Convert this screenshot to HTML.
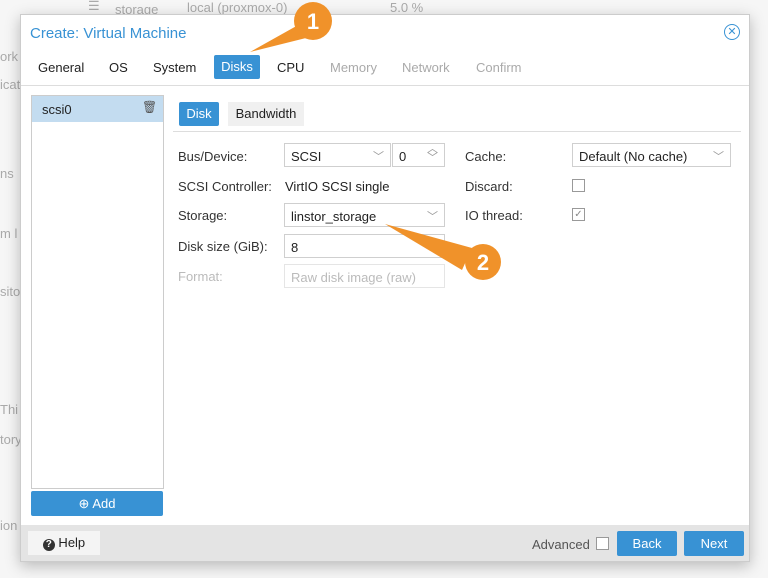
<!DOCTYPE html><html><head><style>
body{margin:0;width:768px;height:578px;background:#f6f6f6;font-family:"Liberation Sans",sans-serif;font-size:13px;color:#222;position:relative;overflow:hidden}
.a{position:absolute}
.bg{color:#aaa;font-size:13px}
.dlg{left:20px;top:14px;width:728px;height:546px;background:#fff;border:1px solid #ccc;box-shadow:0 4px 14px rgba(0,0,0,.25)}
.in{border:1px solid #cfcfcf;background:#fff;height:24px;box-sizing:border-box;padding:5px 6px;font-size:13px}
.lbl{color:#333}
.btn{background:#3892d4;color:#fff;text-align:center;border-radius:2px}
.chev{position:absolute;right:6px;top:4px;color:#999;font-size:11px}
.cb{width:13px;height:13px;border:1px solid #999;box-sizing:border-box;background:#fff}
</style></head><body>
<div class="a bg" style="left:88px;top:-2px">☰</div>
<div class="a bg" style="left:115px;top:2px">storage</div>
<div class="a bg" style="left:187px;top:0px">local (proxmox-0)</div>
<div class="a bg" style="left:390px;top:0px">5.0 %</div>
<div class="a bg" style="left:0;top:49px">ork</div><div class="a bg" style="left:0;top:77px">icat</div>
<div class="a bg" style="left:0;top:166px">ns</div><div class="a bg" style="left:0;top:226px">m l</div>
<div class="a bg" style="left:0;top:284px">sito</div><div class="a bg" style="left:0;top:402px">Thi</div>
<div class="a bg" style="left:0;top:432px">tory</div><div class="a bg" style="left:0;top:518px">ion</div>
<div class="a dlg">
 <div class="a" style="left:9px;top:10px;color:#3892d4;font-size:15px">Create: Virtual Machine</div>
 <div class="a" style="left:703px;top:9px;width:14px;height:14px;border:1px solid #3892d4;border-radius:50%;color:#3892d4;font-size:11px;text-align:center;line-height:14px">✕</div>
 <div class="a" style="left:0;top:38px;width:728px;height:32px;border-bottom:1px solid #ddd"></div>
 <div class="a" style="left:17px;top:45px">General</div>
 <div class="a" style="left:88px;top:45px">OS</div>
 <div class="a" style="left:132px;top:45px">System</div>
 <div class="a btn" style="left:193px;top:40px;width:46px;height:24px;line-height:24px">Disks</div>
 <div class="a" style="left:256px;top:45px">CPU</div>
 <div class="a" style="left:309px;top:45px;color:#aaa">Memory</div>
 <div class="a" style="left:381px;top:45px;color:#aaa">Network</div>
 <div class="a" style="left:455px;top:45px;color:#aaa">Confirm</div>
 <div class="a" style="left:10px;top:80px;width:131px;height:392px;border:1px solid #ccc"></div>
 <div class="a" style="left:11px;top:81px;width:131px;height:26px;background:#c3dcf0"></div>
 <div class="a" style="left:21px;top:87px">scsi0</div>
 <div class="a" style="left:121px;top:85px;color:#555;font-size:12px">🗑</div>
 <div class="a btn" style="left:10px;top:476px;width:132px;height:25px;line-height:25px">⊕ Add</div>
 <div class="a btn" style="left:158px;top:87px;width:40px;height:24px;line-height:24px">Disk</div>
 <div class="a" style="left:207px;top:87px;width:76px;height:24px;line-height:24px;background:#f0f0f0;text-align:center">Bandwidth</div>
 <div class="a" style="left:152px;top:116px;width:568px;border-top:1px solid #ddd"></div>
 <div class="a lbl" style="left:157px;top:134px">Bus/Device:</div>
 <div class="a in" style="left:263px;top:128px;width:107px">SCSI<span class="chev">﹀</span></div>
 <div class="a in" style="left:371px;top:128px;width:53px">0<span class="chev" style="top:1px;line-height:9px">︿<br>﹀</span></div>
 <div class="a lbl" style="left:157px;top:164px">SCSI Controller:</div>
 <div class="a" style="left:264px;top:164px">VirtIO SCSI single</div>
 <div class="a lbl" style="left:157px;top:193px">Storage:</div>
 <div class="a in" style="left:263px;top:188px;width:161px">linstor_storage<span class="chev">﹀</span></div>
 <div class="a lbl" style="left:157px;top:224px">Disk size (GiB):</div>
 <div class="a in" style="left:263px;top:219px;width:161px">8</div>
 <div class="a" style="left:157px;top:254px;color:#bbb">Format:</div>
 <div class="a in" style="left:263px;top:249px;width:161px;color:#bbb;border-color:#e5e5e5">Raw disk image (raw)</div>
 <div class="a lbl" style="left:444px;top:134px">Cache:</div>
 <div class="a in" style="left:551px;top:128px;width:159px">Default (No cache)<span class="chev">﹀</span></div>
 <div class="a lbl" style="left:444px;top:164px">Discard:</div>
 <div class="a cb" style="left:551px;top:164px"></div>
 <div class="a lbl" style="left:444px;top:193px">IO thread:</div>
 <div class="a cb" style="left:551px;top:193px;color:#888;font-size:10px;line-height:11px;text-align:center">✓</div>
 <div class="a" style="left:0;top:510px;width:728px;height:36px;background:#e4e4e4"></div>
 <div class="a" style="left:7px;top:516px;width:72px;height:24px;line-height:24px;background:#f4f4f4;text-align:center"><span style="display:inline-block;width:12px;height:12px;border-radius:50%;background:#333;color:#fff;font-size:10px;line-height:12px;font-weight:bold">?</span> Help</div>
 <div class="a" style="left:511px;top:522px;color:#555">Advanced</div>
 <div class="a cb" style="left:575px;top:522px"></div>
 <div class="a btn" style="left:596px;top:516px;width:60px;height:25px;line-height:25px">Back</div>
 <div class="a btn" style="left:663px;top:516px;width:60px;height:25px;line-height:25px">Next</div>
</div>
<svg class="a" style="left:0;top:0" width="768" height="578">
 <polygon points="250,52 300,24 314,36" fill="#f0922a"/>
 <circle cx="313" cy="21" r="19" fill="#f0922a"/>
 <text x="313" y="29" font-family="Liberation Sans" font-weight="bold" font-size="22" fill="#fff" text-anchor="middle">1</text>
 <polygon points="385,224 472,248 462,270" fill="#f0922a"/>
 <circle cx="483" cy="262" r="18" fill="#f0922a"/>
 <text x="483" y="270" font-family="Liberation Sans" font-weight="bold" font-size="22" fill="#fff" text-anchor="middle">2</text>
</svg>
</body></html>
